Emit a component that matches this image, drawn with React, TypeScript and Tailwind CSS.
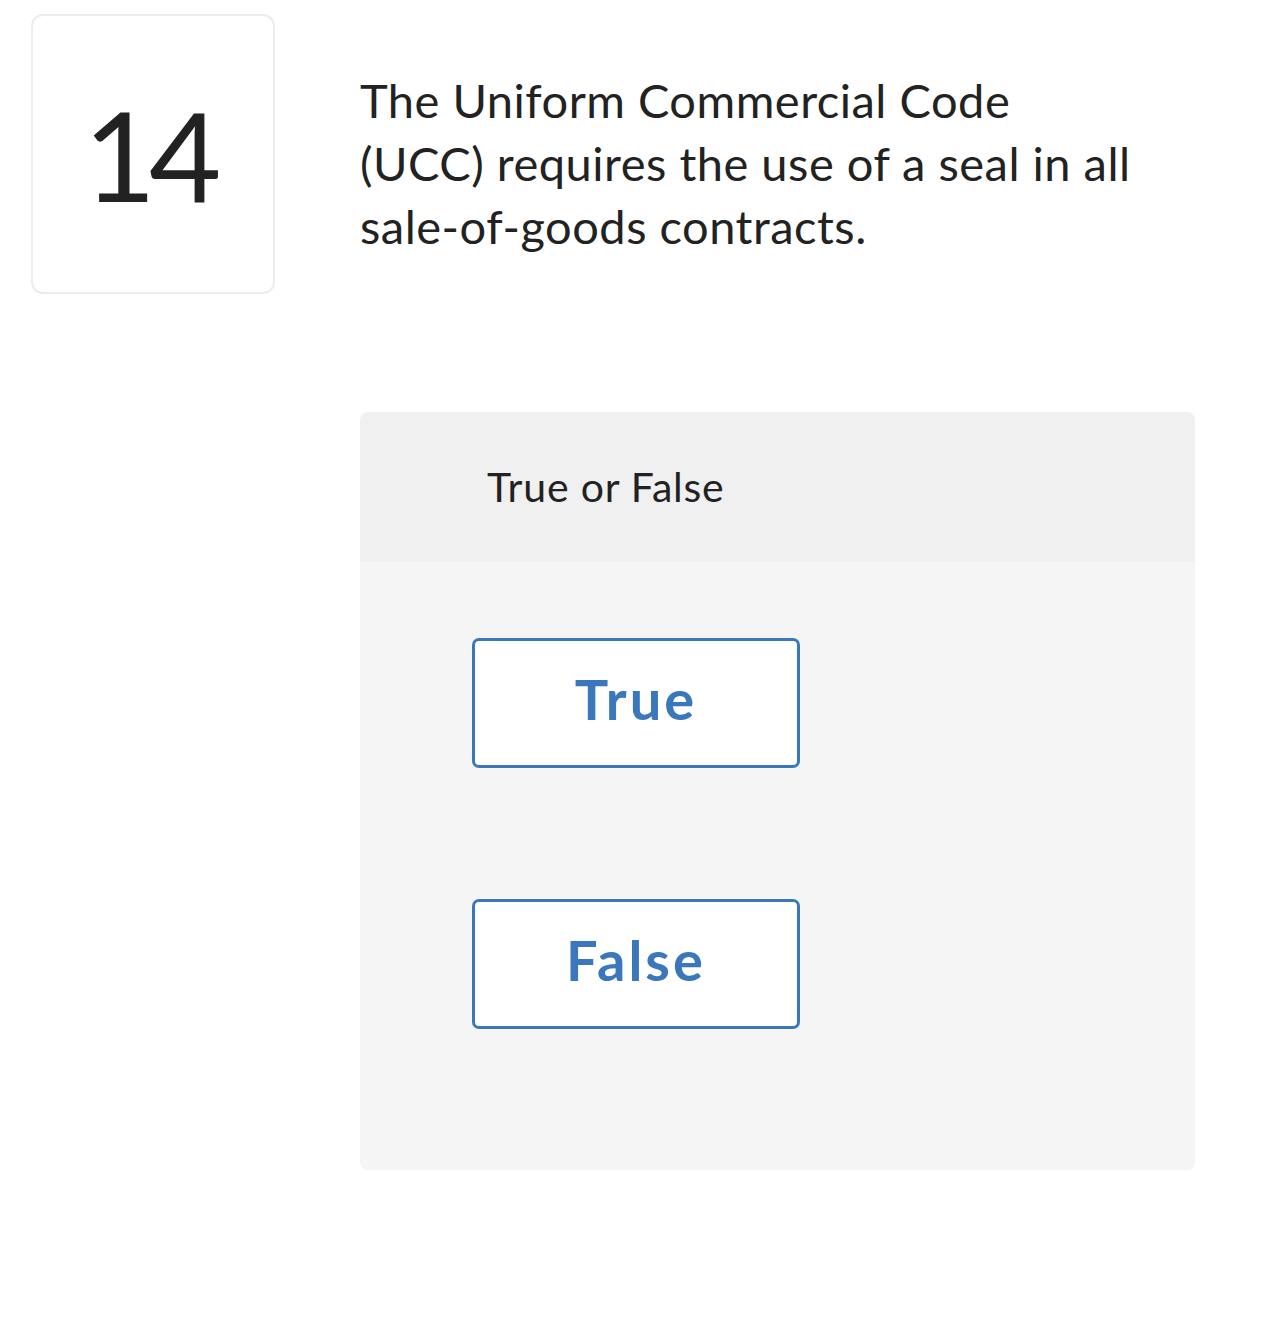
import React from "react";

export default function App() {
  return (
    <div className="min-h-[1322px] w-[1284px] bg-white font-['Lato',sans-serif] text-[#222222]">
      <div className="flex pl-[31px] pt-[14px]">
        <div className="flex h-[280px] w-[244px] shrink-0 items-center justify-center rounded-[12px] border-2 border-[#ececec] bg-white pr-[8px]">
          <span className="text-[125px] leading-none tracking-[-7px]">14</span>
        </div>
        <p className="ml-[85px] mt-[55px] w-[830px] text-[47px] leading-[63px] tracking-[0.5px]">
          The Uniform Commercial Code
          <br />
          (UCC) requires the use of a seal in all
          <br />
          sale-of-goods contracts.
        </p>
      </div>
      <div className="ml-[360px] mt-[118px] w-[835px] overflow-hidden rounded-[8px]">
        <div className="flex h-[150px] items-center bg-[#f0f0f0] pl-[127px]">
          <span className="text-[41px] tracking-[0.8px]">True or False</span>
        </div>
        <div className="flex flex-col gap-[131px] bg-[#f5f5f5] pb-[141px] pl-[112px] pt-[76px]">
          <button className="flex h-[130px] w-[328px] items-center justify-center rounded-[7px] border-[3px] border-[#3a77bd] bg-white pb-[8px] text-[56px] font-bold tracking-[3px] text-[#3a77bd]">
            True
          </button>
          <button className="flex h-[130px] w-[328px] items-center justify-center rounded-[7px] border-[3px] border-[#3a77bd] bg-white pb-[8px] text-[56px] font-bold tracking-[3px] text-[#3a77bd]">
            False
          </button>
        </div>
      </div>
    </div>
  );
}
